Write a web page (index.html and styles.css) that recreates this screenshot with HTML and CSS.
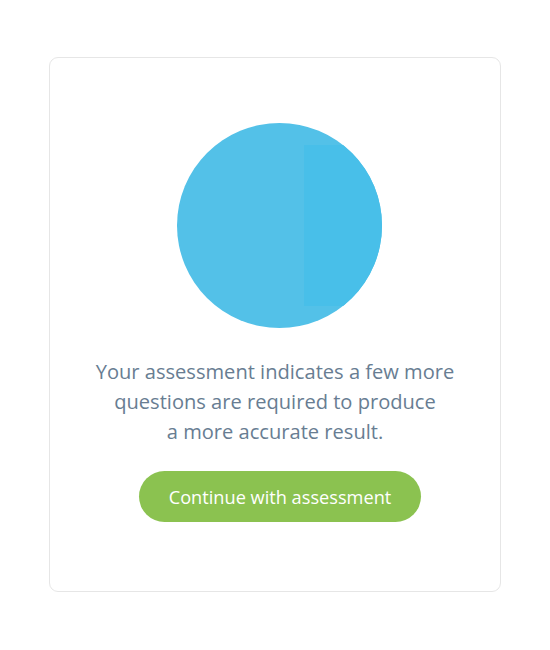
FILE: index.html
```html
<!DOCTYPE html>
<html>
<head>
<meta charset="utf-8">
<link rel="stylesheet" href="styles.css">
</head>
<body>
<div class="card">
  <div class="circle"><div class="shade"></div></div>
  <p class="message">Your assessment indicates a few more<br>questions are required to produce<br>a more accurate result.</p>
  <button class="btn">Continue with assessment</button>
</div>
</body>
</html>
```
FILE: styles.css
```css
html, body {
  margin: 0;
  padding: 0;
  background: #ffffff;
  font-family: "Open Sans", "Liberation Sans", sans-serif;
}
.card {
  box-sizing: border-box;
  margin: 57px 0 0 49px;
  width: 452px;
  height: 535px;
  border: 1px solid #e6e6e6;
  border-radius: 9px;
  display: flex;
  flex-direction: column;
  align-items: center;
  padding-top: 65px;
}
.circle {
  width: 205px;
  height: 205px;
  border-radius: 50%;
  background: #53c1e8;
  overflow: hidden;
  display: flex;
  justify-content: flex-end;
  align-items: center;
  margin-left: 9px;
}
.shade {
  width: 78px;
  height: 161px;
  background: #48bfe9;
}
.message {
  margin: 29px 0 0 0;
  font-size: 20.1px;
  line-height: 30px;
  color: #687d92;
  text-align: center;
}
.btn {
  margin: 24px 0 0 10px;
  width: 282px;
  height: 51px;
  border: none;
  border-radius: 26px;
  background: #8bc250;
  color: #ffffff;
  font-family: "Open Sans", "Liberation Sans", sans-serif;
  font-size: 18.2px;
  padding: 0;
}
```
